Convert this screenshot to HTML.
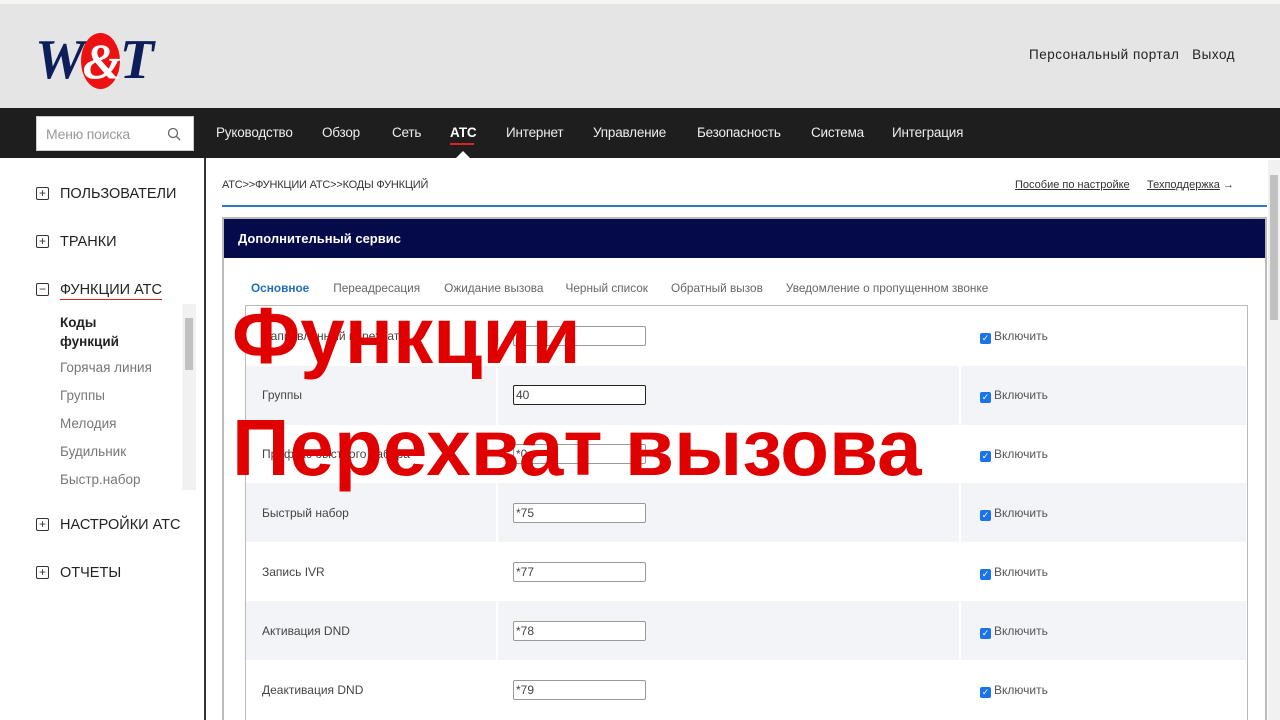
<!DOCTYPE html>
<html><head><meta charset="utf-8"><style>
*{margin:0;padding:0;box-sizing:border-box}
body{width:1280px;height:720px;overflow:hidden;background:#fff;font-family:"Liberation Sans","DejaVu Sans",sans-serif;position:relative}
.a{position:absolute}
.hdr{left:0;top:0;width:1280px;height:108px;background:#e6e5e6;border-top:4px solid #f4f7ef}
.nav{left:0;top:108px;width:1280px;height:50px;background:#1e1e1e}
.nav span{position:absolute;top:17px;color:#eee;font-size:13.5px;letter-spacing:-0.2px}
.side{font-size:14.5px;color:#222}
.sub{font-size:13.5px;color:#777}
.box{width:13px;height:13px;border:1.5px solid #333;border-radius:2px;font-size:12px;line-height:10px;text-align:center;color:#333}
.row{left:246px;width:1000px;height:59px}
.row.g{background:#f2f4f8}
.lbl{left:262px;font-size:12px;color:#444}
.inp{left:513px;width:133px;height:20px;border:1px solid #999;border-radius:2px;font-size:12px;color:#444;padding:2px 2px;background:#fff}
.chk{left:980px;font-size:12px;color:#555}
.chk i{display:inline-block;width:11px;height:11px;background:#1a73e8;border-radius:2px;vertical-align:-1px;margin-right:3px;color:#fff;font-size:9px;line-height:11px;text-align:center;font-style:normal}
.big{left:232px;color:#e00000;font-weight:bold;font-size:80px;line-height:1;white-space:nowrap}
</style></head><body>
<div class="a hdr"></div>
<div class="a" style="left:35px;top:28px;font-family:'Liberation Serif',serif;font-weight:bold;font-style:italic;font-size:56px;color:#0e1e5b;letter-spacing:-4px">W<span style="color:#fff;background:#e11;border-radius:50%;padding:0 2px;font-size:50px">&amp;</span>T</div>
<div class="a" style="left:1029px;top:47px;font-size:13.5px;color:#222;letter-spacing:0.5px">Персональный портал &nbsp; Выход</div>
<div class="a nav">
<div class="a" style="left:36px;top:8px;width:158px;height:35px;background:#fff;border:1px solid #ccc"><span style="position:absolute;left:9px;top:9px;color:#999;font-size:14px">Меню поиска</span><svg class="a" style="left:130px;top:10px" width="14" height="14"><circle cx="6" cy="6" r="4.5" fill="none" stroke="#666" stroke-width="1.3"/><line x1="9.5" y1="9.5" x2="13" y2="13" stroke="#666" stroke-width="1.3"/></svg></div>
<span style="left:216px">Руководство</span><span style="left:322px">Обзор</span><span style="left:392px">Сеть</span><span style="left:450px;font-weight:bold;color:#fff">АТС</span><span style="left:506px">Интернет</span><span style="left:593px">Управление</span><span style="left:697px">Безопасность</span><span style="left:811px">Система</span><span style="left:892px">Интеграция</span>
<div class="a" style="left:450px;top:35px;width:24px;height:2px;background:#d22"></div>
<div class="a" style="left:456px;top:43px;width:0;height:0;border-left:7px solid transparent;border-right:7px solid transparent;border-bottom:7px solid #fff"></div>
</div>
<div class="a" style="left:204px;top:158px;width:2px;height:562px;background:#333"></div>
<div class="a box" style="left:36px;top:187px">+</div><div class="a side" style="left:60px;top:186px">ПОЛЬЗОВАТЕЛИ</div>
<div class="a box" style="left:36px;top:235px">+</div><div class="a side" style="left:60px;top:234px">ТРАНКИ</div>
<div class="a box" style="left:36px;top:283px">−</div><div class="a side" style="left:60px;top:282px;border-bottom:1px solid #d22;padding-bottom:1px">ФУНКЦИИ АТС</div>
<div class="a" style="left:60px;top:313px;font-size:13.5px;font-weight:bold;color:#222;line-height:19px">Коды<br>функций</div>
<div class="a sub" style="left:60px;top:360px">Горячая линия</div>
<div class="a sub" style="left:60px;top:388px">Группы</div>
<div class="a sub" style="left:60px;top:416px">Мелодия</div>
<div class="a sub" style="left:60px;top:444px">Будильник</div>
<div class="a sub" style="left:60px;top:472px">Быстр.набор</div>
<div class="a" style="left:182px;top:304px;width:14px;height:186px;background:#f1f1f1"></div>
<div class="a" style="left:185px;top:318px;width:8px;height:52px;background:#c1c1c1"></div>
<div class="a box" style="left:36px;top:518px">+</div><div class="a side" style="left:60px;top:517px">НАСТРОЙКИ АТС</div>
<div class="a box" style="left:36px;top:566px">+</div><div class="a side" style="left:60px;top:565px">ОТЧЕТЫ</div>
<div class="a" style="left:222px;top:179px;font-size:11px;color:#333;letter-spacing:-0.2px">АТС&gt;&gt;ФУНКЦИИ АТС&gt;&gt;КОДЫ ФУНКЦИЙ</div>
<div class="a" style="left:1015px;top:179px;font-size:11px;color:#333;text-decoration:underline">Пособие по настройке</div>
<div class="a" style="left:1147px;top:179px;font-size:11px;color:#333"><u>Техподдержка</u> →</div>
<div class="a" style="left:222px;top:205px;width:1045px;height:2px;background:#2a7bc0"></div>
<div class="a" style="left:1268px;top:160px;width:12px;height:560px;background:#f1f1f1"></div>
<div class="a" style="left:1270px;top:175px;width:8px;height:145px;background:#c1c1c1"></div>
<div class="a" style="left:222px;top:217px;width:1045px;height:503px;border:2px solid #bbb;border-bottom:none"></div>
<div class="a" style="left:224px;top:219px;width:1041px;height:39px;background:#050a4a;color:#fff;font-weight:bold;font-size:13px;padding:12px 14px">Дополнительный сервис</div>
<div class="a" style="top:281px;left:251px;font-size:11.8px;color:#666;white-space:nowrap"><b style="color:#1e6fc0">Основное</b><span style="margin-left:24px">Переадресация</span><span style="margin-left:24px">Ожидание вызова</span><span style="margin-left:22px">Черный список</span><span style="margin-left:23px">Обратный вызов</span><span style="margin-left:23px">Уведомление о пропущенном звонке</span></div>
<div class="a" style="left:245px;top:305px;width:1003px;height:415px;border:1px solid #bbb;border-bottom:none"></div>
<div class="a row" style="top:306px"></div><div class="a row g" style="top:366px"></div><div class="a row" style="top:425px"></div><div class="a row g" style="top:483px"></div><div class="a row" style="top:542px"></div><div class="a row g" style="top:601px"></div><div class="a row" style="top:660px"></div>
<div class="a" style="left:496px;top:306px;width:2px;height:414px;background:#fff"></div>
<div class="a" style="left:959px;top:306px;width:2px;height:414px;background:#fff"></div>
<div class="a lbl" style="top:329px">Направленный перехват</div><div class="a inp" style="top:326px"></div>
<div class="a lbl" style="top:388px">Группы</div><div class="a inp" style="top:385px;border:1.5px solid #222">40</div>
<div class="a lbl" style="top:447px">Префикс быстрого набора</div><div class="a inp" style="top:444px">*0</div>
<div class="a lbl" style="top:506px">Быстрый набор</div><div class="a inp" style="top:503px">*75</div>
<div class="a lbl" style="top:565px">Запись IVR</div><div class="a inp" style="top:562px">*77</div>
<div class="a lbl" style="top:624px">Активация DND</div><div class="a inp" style="top:621px">*78</div>
<div class="a lbl" style="top:683px">Деактивация DND</div><div class="a inp" style="top:680px">*79</div>
<div class="a chk" style="top:329px"><i>✓</i>Включить</div>
<div class="a chk" style="top:388px"><i>✓</i>Включить</div>
<div class="a chk" style="top:447px"><i>✓</i>Включить</div>
<div class="a chk" style="top:506px"><i>✓</i>Включить</div>
<div class="a chk" style="top:565px"><i>✓</i>Включить</div>
<div class="a chk" style="top:624px"><i>✓</i>Включить</div>
<div class="a chk" style="top:683px"><i>✓</i>Включить</div>
<div class="a big" style="top:296px">Функции</div>
<div class="a big" style="top:408px">Перехват вызова</div>
</body></html>
